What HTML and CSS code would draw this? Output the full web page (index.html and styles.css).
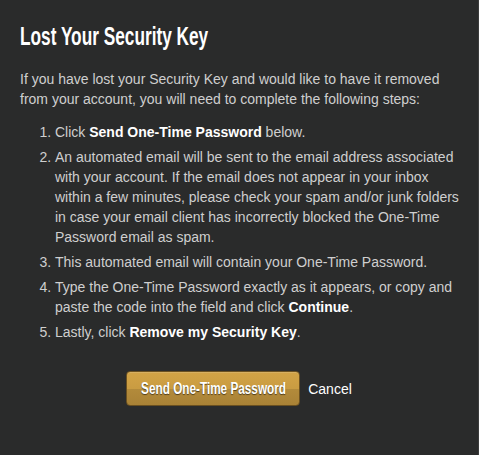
FILE: index.html
```html
<!DOCTYPE html>
<html lang="en">
<head>
    <meta charset="UTF-8">
    <title>Lost Your Security Key</title>
    <link rel="stylesheet" href="styles.css">
</head>
<body>
    <div class="dialog">
        <h2 class="title"><span>Lost Your Security Key</span></h2>
        <p class="intro">If you have lost your Security Key and would like to have it removed from your account, you will need to complete the following steps:</p>
        <ol class="steps">
            <li>Click <b>Send One-Time Password</b> below.</li>
            <li>An automated email will be sent to the email address associated with your account. If the email does not appear in your inbox within a few minutes, please check your spam and/or junk folders in case your email client has incorrectly blocked the One-Time Password email as spam.</li>
            <li>This automated email will contain your One-Time Password.</li>
            <li>Type the One-Time Password exactly as it appears, or copy and paste the code into the field and click <b>Continue</b>.</li>
            <li>Lastly, click <b>Remove my Security Key</b>.</li>
        </ol>
        <div class="actions">
            <button class="btn-gold"><span>Send One-Time Password</span></button>
            <a href="#" class="cancel">Cancel</a>
        </div>
    </div>
</body>
</html>
```
FILE: styles.css
```css
html, body {
    margin: 0;
    padding: 0;
    background-color: #2a2b2b;
}
body {
    font-family: 'Liberation Sans', Arial, sans-serif;
    font-size: 14px;
    line-height: 20px;
    color: #cfcfcf;
}
.dialog {
    height: 455px;
    box-sizing: border-box;
    padding: 19px 12px 0 20px;
    border-right: 1px solid #3b3c3c;
}
.title {
    margin: 0 0 16px 0;
    font-family: 'Liberation Sans', Arial, sans-serif;
    font-weight: bold;
    font-size: 25px;
    line-height: 34px;
    color: #fff;
    white-space: nowrap;
}
/* condensed headline face */
.title span {
    display: inline-block;
    transform: scaleX(0.69);
    transform-origin: left center;
}
.intro {
    margin: 0 0 13px 0;
}
.steps {
    margin: 0;
    padding-left: 35px;
}
.steps li {
    margin-bottom: 5px;
}
.steps b {
    color: #fff;
}
.actions {
    display: flex;
    align-items: center;
    justify-content: center;
    gap: 8px;
    margin-top: 29px;
    padding-right: 8px;
}
.btn-gold {
    display: flex;
    align-items: center;
    justify-content: center;
    width: 174px;
    height: 35px;
    padding: 0;
    border: 1px solid #6a5020;
    border-radius: 4px;
    background: linear-gradient(#d2a346 0%, #c99c42 50%, #b38b3b 50%, #a98236 100%);
    box-shadow: inset 0 1px 0 rgba(255, 255, 255, 0.15);
    color: #fff;
    font-family: 'Liberation Sans', Arial, sans-serif;
    font-weight: bold;
    font-size: 16px;
    white-space: nowrap;
    text-shadow: 0 1px 1px rgba(0, 0, 0, 0.55);
    cursor: pointer;
}
.btn-gold span {
    display: inline-block;
    transform: scaleX(0.735);
}
.cancel {
    color: #fff;
    text-decoration: none;
    font-size: 14px;
}
```
